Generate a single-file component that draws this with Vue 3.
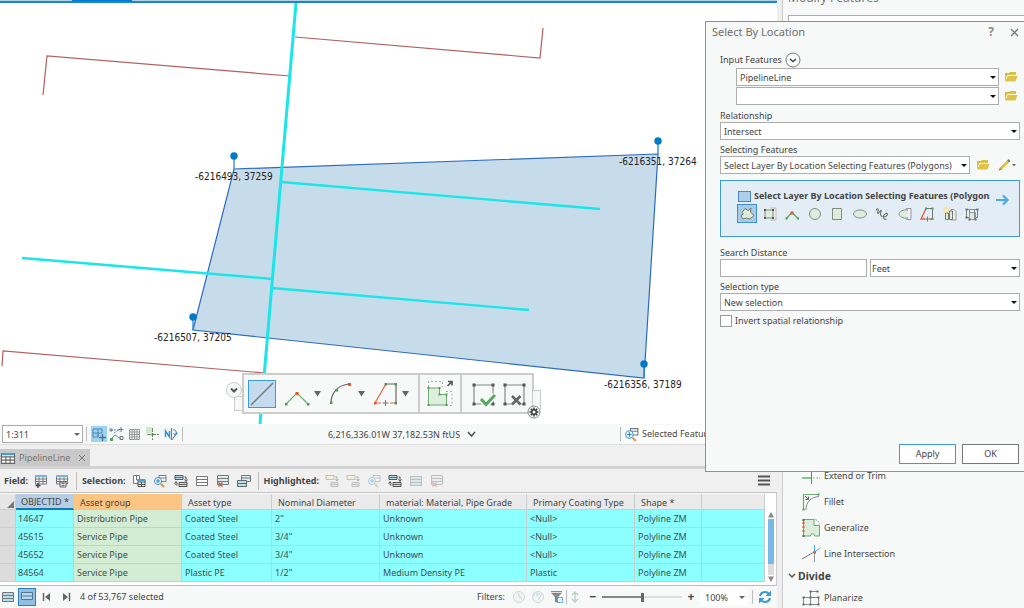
<script setup>
import { ref } from 'vue'

const pins = [
  { x: 234, top: 156, foot: 169, tx: 195, ty: 180, label: '-6216493, 37259' },
  { x: 658, top: 141, foot: 154, tx: 619, ty: 165, label: '-6216351, 37264' },
  { x: 193, top: 317, foot: 330, tx: 154, ty: 341, label: '-6216507, 37205' },
  { x: 644, top: 364, foot: 378, tx: 604, ty: 388, label: '-6216356, 37189' },
]

const columns = [
  { name: 'OBJECTID *', cls: 'c-id' },
  { name: 'Asset group', cls: 'c-group' },
  { name: 'Asset type', cls: 'c-type' },
  { name: 'Nominal Diameter', cls: 'c-dia' },
  { name: 'material: Material, Pipe Grade', cls: 'c-mat' },
  { name: 'Primary Coating Type', cls: 'c-coat' },
  { name: 'Shape *', cls: 'c-shape' },
  { name: '', cls: 'c-rest' },
]
const rows = [
  ['14647', 'Distribution Pipe', 'Coated Steel', '2"', 'Unknown', '<Null>', 'Polyline ZM', ''],
  ['45615', 'Service Pipe', 'Coated Steel', '3/4"', 'Unknown', '<Null>', 'Polyline ZM', ''],
  ['45652', 'Service Pipe', 'Coated Steel', '3/4"', 'Unknown', '<Null>', 'Polyline ZM', ''],
  ['84564', 'Service Pipe', 'Plastic PE', '1/2"', 'Medium Density PE', 'Plastic', 'Polyline ZM', ''],
]

const zoom = ref(50)
const distance = ref('')
const invert = ref(false)
</script>

<template>
  <div class="app">
    <svg class="defs" width="0" height="0" aria-hidden="true">
      <symbol id="folder" viewBox="0 0 14 12">
        <path d="M1 10V2h4l1-1h6v3H4L1 10z" fill="#d8be45" />
        <path d="M1 10.500 3.500 5H13.500L11.500 10.500z" fill="#dec34a" />
        <path d="M2 8 3.600 4.400H12.500" stroke="#fff6c8" stroke-width="1" fill="none" />
      </symbol>
      <symbol id="grid-table" viewBox="0 0 14 12">
        <path d="M1 1.500h12v9H1zM1 4.500h12M1 7.500h12M5 4v6.500M9 4v6.500" fill="#fff" stroke="#666" />
        <path d="M1 1h12v2H1z" fill="#3f9fd8" />
      </symbol>
      <symbol id="lines" viewBox="0 0 14 12">
        <path d="M1.500 1.500h11v9h-11zM1.500 4.500h11M1.500 7.500h11" fill="#fff" stroke="#777" />
      </symbol>
      <symbol id="lines-blue" viewBox="0 0 14 12">
        <path d="M1.500 1.500h11v9h-11z" fill="#b5deef" stroke="#777" />
        <path d="M1.500 4.500h11M1.500 7.500h11" stroke="#777" />
      </symbol>
      <symbol id="lines-clear" viewBox="0 0 14 14">
        <path d="M1.500 1.500h11v9h-11z" fill="#d9edf4" stroke="#777" />
        <path d="M1.500 4.500h11M1.500 7.500h11" stroke="#777" />
        <path d="M2.500 8.500l4 4M6.500 8.500l-4 4" stroke="#dc5b3d" stroke-width="1.500" />
      </symbol>
      <symbol id="switch" viewBox="0 0 14 14">
        <path d="M1 1.500h8v4H1z" fill="#bfe0ea" stroke="#555" />
        <path d="M5 8.500h8v4H5z" fill="#bfe0ea" stroke="#555" />
        <path d="M1 3.500h8M5 10.500h8" stroke="#666" />
        <path d="M10.500 3h1.500v4M10.500 5.500l1.500 2 1.500-2M3.500 11H2V8M.5 9.500 2 7.500l1.500 2" fill="none" stroke="#555" />
      </symbol>
      <symbol id="push" viewBox="0 0 14 14">
        <path d="M1 1.500h8v4H1z" fill="#fff1b8" stroke="#777" />
        <path d="M6 8.500h7v4H6zM6 10.500h7" fill="#c8e6f3" stroke="#777" />
        <path d="M10 3h2v4M10.500 5l1.500 2 1.500-2" fill="none" stroke="#555" />
      </symbol>
      <symbol id="zoom-sel" viewBox="0 0 14 14">
        <path d="M6 1.500h7v6H6zM6 4h7" fill="#fff" stroke="#777" />
        <circle cx="5" cy="7" r="3.500" fill="#e9f5fc" stroke="#3f97d4" />
        <path d="M3 7h4M5 5v4" stroke="#2f80bd" />
        <path d="M8 10l3 3" stroke="#d59a4c" stroke-width="2" />
      </symbol>
    </svg>

    <main class="work">
      <div class="ribbon-edge"><span class="active-tab"></span></div>

      <section class="map" aria-label="Map view">
        <svg class="canvas" width="100%" height="100%">
          <g transform="translate(0 -3)">
            <g fill="none" stroke="#b1605f" stroke-width="1.200">
              <path d="M43 95 47 56 290 76" />
              <path d="M295 37 540 58 543 28" />
              <path d="M2 366 3 351 265 373" />
            </g>
            <path d="M234 169 658 154 644 378 193 330z" fill="#c7dceb" stroke="#2c6abf" stroke-width="1.200" />
            <g fill="none" stroke="#1ae6ea" stroke-width="3">
              <path d="M296 3 260 424" />
              <path d="M281 182 600 209" stroke-width="2.400" />
              <path d="M22 258 273 279" stroke-width="2.400" />
              <path d="M272 288 529 310" stroke-width="2.400" />
            </g>
            <g v-for="p in pins" :key="p.label">
              <path :d="`M${p.x} ${p.top}V${p.foot}`" stroke="#2a86cb" stroke-width="1.300" />
              <circle :cx="p.x" :cy="p.top" r="3.700" fill="#007ac9" />
              <text :x="p.tx" :y="p.ty" class="coord">{{ p.label }}</text>
            </g>
          </g>
        </svg>

        <div class="sketch">
          <span class="wing left"></span>
          <span class="wing right"></span>
          <button class="round collapse" aria-label="Collapse toolbar">
            <svg width="16" height="16"><circle cx="8" cy="8" r="7.500" fill="#f7f9f8" stroke="#ccc" /><path d="M5 6.500l3 3 3-3" fill="none" stroke="#555" stroke-width="2" /></svg>
          </button>
          <div class="seg seg-a">
            <button class="tool on" aria-label="Line">
              <svg width="28" height="28"><path d="M3 25 25 3" stroke="#777" stroke-width="1.400" /></svg>
            </button>
            <button class="tool" aria-label="Right angle line">
              <svg width="28" height="28"><path d="M3 24 14 13 25 24" fill="none" stroke="#6aae6e" stroke-width="1.200" /><path d="M2 23h2.500v2.500H2zM24 23h2.500v2.500H24z" fill="#4d9953" /><path d="M12.500 12h3v3h-3z" fill="#e05a30" /></svg>
            </button>
            <svg class="drop" width="7" height="6"><path d="M0 0h7L3.500 5.500z" fill="#666" /></svg>
            <button class="tool" aria-label="Arc">
              <svg width="28" height="28"><path d="M4 23C4 13 11 5 22 4" fill="none" stroke="#666" stroke-width="1.200" /><path d="M3 21.500h2.500V24H3zM8.500 9H11v2.500H8.500z" fill="#4d9953" /><path d="M21 3h3v3h-3z" fill="#e05a30" /></svg>
            </button>
            <svg class="drop" width="7" height="6"><path d="M0 0h7L3.500 5.500z" fill="#666" /></svg>
            <button class="tool" aria-label="Trace">
              <svg width="28" height="28"><path d="M15 4h10v19" fill="none" stroke="#666" stroke-width="1.200" /><path d="M15 4 4 23h6M19 23h5" fill="none" stroke="#e1684a" stroke-width="1.200" /><path d="M14.500 20v6M11.500 23h6" stroke="#777" /><path d="M13.500 3H16v2.500h-2.500zM23.500 3H26v2.500h-2.500zM23.500 22H26v2.500h-2.500z" fill="#4d9953" /><path d="M3 22h2.500v2.500H3z" fill="#e05a30" /></svg>
            </button>
            <svg class="drop" width="7" height="6"><path d="M0 0h7L3.500 5.500z" fill="#666" /></svg>
          </div>
          <div class="seg seg-b">
            <button class="tool" aria-label="Copy shape">
              <svg width="28" height="28"><path d="M2.500 7V1.500h14V7M20 11.500h6v14h-6" fill="none" stroke="#aaa" stroke-dasharray="2 2" /><path d="M2.500 8h11v6.500h7V25h-18z" fill="#ddeedb" stroke="#6dad71" /><path d="M1.500 7h2v2h-2zM12.500 7h2v2h-2zM12.500 13.500h2v2h-2zM19.500 13.500h2v2h-2zM1.500 24h2v2h-2zM19.500 24h2v2h-2z" fill="#569a5a" /><path d="M22 1.500h4v4M26 1.500l-4.500 4.500" fill="none" stroke="#555" stroke-width="1.600" /></svg>
            </button>
          </div>
          <div class="seg seg-c">
            <button class="tool" aria-label="Finish">
              <svg width="28" height="28"><path d="M4 5h19v19H4z" fill="none" stroke="#888" stroke-width="1.200" /><path d="M2.500 3.500h3v3h-3zM21.500 3.500h3v3h-3zM2.500 22.500h3v3h-3zM21.500 22.500h3v3h-3z" fill="#555" /><path d="M11 19l5 5.500L25 15" fill="none" stroke="#f7f9f8" stroke-width="6" /><path d="M11 19l5 5.500L25 15" fill="none" stroke="#58a85c" stroke-width="3" /></svg>
            </button>
            <button class="tool" aria-label="Discard">
              <svg width="28" height="28"><path d="M5 5h19v19H5z" fill="none" stroke="#888" stroke-width="1.200" /><path d="M3.500 3.500h3v3h-3zM22.500 3.500h3v3h-3zM3.500 22.500h3v3h-3zM22.500 22.500h3v3h-3z" fill="#555" /><path d="M12 16l8.500 8.500M20.500 16 12 24.500" stroke="#f7f9f8" stroke-width="6" /><path d="M12 16l8.500 8.500M20.500 16 12 24.500" stroke="#666" stroke-width="2.600" /></svg>
            </button>
          </div>
          <button class="round gear" aria-label="Toolbar settings">
            <svg width="14" height="14"><circle cx="7" cy="7" r="6" fill="#f7f9f8" stroke="#888" /><circle cx="7" cy="7" r="2.300" fill="none" stroke="#333" stroke-width="1.400" /><path d="M7 2.500v1.500M7 10v1.500M2.500 7H4M10 7h1.500M3.800 3.800l1.100 1.100M9.100 9.100l1.100 1.100M3.800 10.200l1.100-1.100M9.100 4.900l1.100-1.100" stroke="#333" stroke-width="1.500" /></svg>
          </button>
        </div>
      </section>

      <div class="status">
        <span class="pick scale"><select aria-label="Map scale"><option>1:311</option></select><i class="tri soft"></i></span>
        <i class="sep"></i>
        <div class="status-tools">
          <button class="on" aria-label="Snapping"><svg width="16" height="16"><path d="M2 3h5v4H2zM7 3h4v4M2 7v4h5V7M7 11V7h4" fill="none" stroke="#4c88ad" /><path d="M11.500 8v7M8 11.500h7" stroke="#4f7690" stroke-width="1.400" /></svg></button>
          <button aria-label="Inference"><svg width="16" height="16"><path d="M2 13 6 9l3 2 3 2" fill="none" stroke="#4ba0d6" /><path d="M2 4h8M5 7l5-3" stroke="#58a6d8" stroke-dasharray="2 1" /><path d="M12 1v5M9.500 3.500h5M11 10.500h3v3h-3zM1 3h2v2H1z" fill="none" stroke="#777" /><path d="M1 12h3v3H1z" fill="#55a05a" /></svg></button>
          <button aria-label="Grid"><svg width="16" height="16"><path d="M2.500 3.500h10v10h-10zM5 3.500v10M7.500 3.500v10M10 3.500v10M2.500 6h10M2.500 8.500h10M2.500 11h10" fill="none" stroke="#999" /></svg></button>
          <button aria-label="Dynamic constraints"><svg width="16" height="16"><path d="M1 1h6v6H1z" fill="#d3e9ce" /><path d="M7.500 2v12M2 8.500h12" stroke="#6b8f6b" stroke-dasharray="4 1" /><path d="M6.500 7.500h2v2h-2z" fill="#3f8c46" /></svg></button>
          <button aria-label="Correction"><svg width="16" height="16"><path d="M2.500 11V5l4 6V5" fill="none" stroke="#3594d3" stroke-width="1.500" /><path d="M8.500 2v12M9 14l5-8" stroke="#777" /><path d="M10 4q4-1 3 5M10.500 7l2 2.500L14.500 7" fill="none" stroke="#3594d3" /></svg></button>
        </div>
        <i class="sep"></i>
        <div class="coords">6,216,336.01W 37,182.53N ftUS
          <svg width="10" height="7"><path d="M1 1l3.500 4L8 1" fill="none" stroke="#555" stroke-width="1.600" /></svg>
        </div>
        <i class="sep"></i>
        <div class="selected"><svg width="15" height="15"><use href="#zoom-sel" /></svg>Selected Features: 4</div>
      </div>

      <div class="tabs">
        <div class="tab"><svg width="16" height="13"><use href="#grid-table" /></svg><span>PipelineLine</span>
          <button aria-label="Close tab"><svg width="8" height="8"><path d="M1 1l6 6M7 1 1 7" stroke="#777" /></svg></button>
        </div>
      </div>

      <div class="bar">
        <b>Field:</b>
        <div class="icons">
          <button aria-label="Add field"><svg width="14" height="14"><path d="M1.500 2h11v8h-11zM1.500 5h11M5 2v8M9 2v8M1.500 7.500h11" fill="#fff" stroke="#777" /><path d="M1 1h12v2H1z" fill="#7ab4d8" /><path d="M4 9v5M1.500 11.500h5" stroke="#444" stroke-width="1.400" /></svg></button>
          <button aria-label="Calculate field"><svg width="14" height="14"><path d="M1.500 2h11v8h-11zM1.500 5h11M5 2v8M9 2v8M1.500 7.500h11" fill="#fff" stroke="#777" /><path d="M1 1h12v2H1z" fill="#7ab4d8" /><path d="M5 8h6v5H5z" fill="#eee" stroke="#666" /><path d="M6.500 9.500h3M6.500 11.500h3" stroke="#666" /></svg></button>
        </div>
        <i class="sep"></i>
        <b>Selection:</b>
        <div class="icons">
          <button aria-label="Select by attributes"><svg width="14" height="14"><path d="M1.500 1.500h6v8h-6z" fill="#fff" stroke="#777" /><path d="M4.500 1v5h3" stroke="#777" fill="none" /><path d="M6 5.500h7v7H6zM6 8h7M6 10.500h7M9.500 8v4.500" fill="#e7f4fa" stroke="#555" /><path d="M6 5h7v2H6z" fill="#4ba0c8" /></svg></button>
          <button aria-label="Zoom to selection"><svg width="14" height="14"><use href="#zoom-sel" /></svg></button>
          <button aria-label="Switch selection"><svg width="14" height="14"><use href="#switch" /></svg></button>
          <button aria-label="Select all"><svg width="14" height="12"><use href="#lines" /></svg></button>
          <button aria-label="Clear selection"><svg width="14" height="14"><use href="#lines-clear" /></svg></button>
          <button aria-label="Copy rows"><svg width="14" height="14"><path d="M4.500 1.500h9v6h-9zM4.500 4h9" fill="#d9edf4" stroke="#777" /><path d="M.5 6.500h9v6h-9zM.5 9.500h9" fill="#b5deef" stroke="#666" /></svg></button>
        </div>
        <i class="sep"></i>
        <b>Highlighted:</b>
        <div class="icons">
          <button class="dim" aria-label="Select highlighted"><svg width="14" height="14"><use href="#push" /></svg></button>
          <button class="dim" aria-label="Unselect highlighted"><svg width="14" height="14"><use href="#push" /></svg></button>
          <button class="dim" aria-label="Zoom to highlighted"><svg width="14" height="14"><use href="#zoom-sel" /></svg></button>
          <button aria-label="Switch highlighted"><svg width="14" height="14"><use href="#switch" /></svg></button>
          <button class="dim" aria-label="Highlight all"><svg width="14" height="12"><use href="#lines-blue" /></svg></button>
          <button class="dim" aria-label="Delete highlighted"><svg width="14" height="14"><use href="#lines-clear" /></svg></button>
        </div>
        <button class="menu" aria-label="Table menu"><svg width="12" height="12"><path d="M0 1.500h12M0 5.500h12M0 9.500h12" stroke="#555" stroke-width="2" /></svg></button>
      </div>

      <div class="grid-wrap">
        <table>
          <thead>
            <tr><th class="gut"><svg width="7" height="7"><path d="M7 0v7H0z" fill="#777" /></svg></th><th v-for="c in columns" :key="c.cls" :class="c.cls">{{ c.name }}</th></tr>
          </thead>
          <tbody>
            <tr v-for="r in rows" :key="r[0]"><td class="gut"></td><td v-for="(v, i) in r" :key="i" :class="columns[i].cls">{{ v }}</td></tr>
          </tbody>
        </table>
        <div class="scroll">
          <svg width="8" height="6"><path d="M1 5.500h6L4 0z" fill="#888" /></svg>
          <div class="track"><div class="thumb"></div></div>
          <svg width="8" height="6"><path d="M1 .5h6L4 6z" fill="#888" /></svg>
        </div>
      </div>

      <div class="foot">
        <button class="view" aria-label="Show all records"><svg width="14" height="12"><use href="#lines-blue" /></svg></button>
        <button class="view on" aria-label="Show selected records"><svg width="14" height="12"><path d="M1.500 1.500h11v7h-11zM1.500 5h11" fill="#b9d9ec" stroke="#56788f" /></svg></button>
        <button class="nav" aria-label="First record"><svg width="10" height="8"><path d="M1.500 0v8" stroke="#666" stroke-width="1.500" /><path d="M8 0v8L3 4z" fill="#666" /></svg></button>
        <button class="nav" aria-label="Last record"><svg width="10" height="8"><path d="M8.500 0v8" stroke="#666" stroke-width="1.500" /><path d="M2 0v8l5-4z" fill="#666" /></svg></button>
        <span class="count">4 of 53,767 selected</span>
        <span class="filters">Filters:</span>
        <div class="filter-icons">
          <button class="dim" aria-label="Time filter"><svg width="14" height="14"><circle cx="7" cy="7" r="5.500" fill="#e8efe9" stroke="#9aa" /><path d="M7 3.500V7l3 1" fill="none" stroke="#89a" /></svg></button>
          <button class="dim" aria-label="Range filter"><svg width="14" height="14"><circle cx="7" cy="7" r="5.500" fill="#edf3ee" stroke="#9aa" /><path d="M3 2v5M6 2v5M2 4h7M7 10l4-6" fill="none" stroke="#8bb3cc" /></svg></button>
          <button aria-label="Extent filter"><svg width="14" height="14"><path d="M1 1h11v2L8 7v6l-3-1V7L1 3z" fill="#888" /><path d="M1 2.500h11" stroke="#ddd" /><path d="M7.500 7.500h5v5h-5z" fill="#e5f3fb" stroke="#2c91d3" stroke-dasharray="2 1" /></svg></button>
        </div>
        <i class="sep"></i>
        <button class="dim" aria-label="Row height"><svg width="10" height="14"><path d="M5 2v10M2 5l3-3 3 3M2 9l3 3 3-3" fill="none" stroke="#6b9b76" stroke-width="1.500" /></svg></button>
        <button class="step" aria-label="Zoom out">−</button>
        <input v-model="zoom" class="slider" type="range" min="0" max="100" aria-label="Table zoom">
        <button class="step" aria-label="Zoom in">+</button>
        <span class="pick percent"><select aria-label="Zoom percent"><option>100%</option></select><i class="tri soft"></i></span>
        <i class="sep"></i>
        <button class="refresh" aria-label="Refresh"><svg width="14" height="14"><path d="M2 6a5 4.500 0 0 1 9-2M12 8a5 4.500 0 0 1-9 2" fill="none" stroke="#3c9adb" stroke-width="2" /><path d="M13 .5v5.500H7.500zM1 13.500V8h5.500z" fill="#3c9adb" /></svg></button>
      </div>
    </main>

    <aside class="pane">
      <h2>Modify Features</h2>
      <div class="search"></div>
      <ul>
        <li><svg width="20" height="20"><path d="M1 12h9" stroke="#5bab5f" stroke-width="1.400" /><path d="M10.500 1v17" stroke="#777" /><path d="M12 12h7" stroke="#aaa" stroke-dasharray="2 1" /></svg><a href="#extend">Extend or Trim</a></li>
        <li><svg width="20" height="20"><path d="M2.500 18V2.500H18" fill="none" stroke="#6aae6e" stroke-width="1.200" /><path d="M5 18C5 10 10 5 18 4.500" fill="none" stroke="#888" /><path d="M1.500 16.500h2v2h-2zM16.500 1.500h2v2h-2z" fill="#4d9953" /><path d="M4 4l3 3M7.500 4.500v3h-3" fill="none" stroke="#666" /></svg><a href="#fillet">Fillet</a></li>
        <li><svg width="20" height="20"><path d="M2.500 1.500H13v6h5.500v10.500h-5c0-3-4-3-4 0h-7z" fill="#dcedda" stroke="#69ab6d" /><path d="M14 1.500c3 1 4 2 4.500 5" fill="none" stroke="#aaa" stroke-dasharray="2 1" /><path d="M2.500 4v12" stroke="#e0582f" stroke-width="2" stroke-dasharray="2 2" /><path d="M1.500 1h2v2h-2zM1.500 17h2v2h-2z" fill="#4e6b50" /></svg><a href="#generalize">Generalize</a></li>
        <li><svg width="20" height="20"><path d="M1 15 13 8" stroke="#777" /><path d="M13.500 8v10" stroke="#999" /><path d="M13.500 1v7l6-4" fill="none" stroke="#54ace1" /><path d="M12.500 7h2.500v2.500h-2.500z" fill="#e0582f" /></svg><a href="#intersection">Line Intersection</a></li>
      </ul>
      <h3><svg width="8" height="6"><path d="M1 1l3 3 3-3" fill="none" stroke="#555" stroke-width="1.500" /></svg>Divide</h3>
      <ul>
        <li><svg width="20" height="20"><path d="M2.500 9.500h15v7h-15zM9.500 3v13.500M9.500 3.500h7" fill="none" stroke="#888" /><path d="M1.500 8.500h2v2h-2zM8.500 8.500h2v2h-2zM16.500 8.500h2v2h-2zM1.500 15.500h2v2h-2zM8.500 15.500h2v2h-2zM16.500 15.500h2v2h-2zM8.500 2.500h2v2h-2zM15.500 2.500h2v2h-2z" fill="#666" /></svg><a href="#planarize">Planarize</a></li>
      </ul>
    </aside>

    <section class="dialog" role="dialog" aria-labelledby="dlg-title">
      <header>
        <h1 id="dlg-title">Select By Location</h1>
        <button class="help" aria-label="Help">?</button>
        <button aria-label="Close"><svg width="9" height="9"><path d="M1 1l7 7M8 1 1 8" stroke="#777" stroke-width="1.300" /></svg></button>
      </header>
      <form @submit.prevent>
        <div class="inputs-head">
          <label for="in1">Input Features</label>
          <button type="button" aria-label="Add many"><svg width="16" height="16"><circle cx="8" cy="8" r="7" fill="#fff" stroke="#777" /><path d="M5 7l3 2.500L11 7" fill="none" stroke="#444" stroke-width="1.500" /></svg></button>
        </div>
        <div class="line inset">
          <span class="pick"><select id="in1"><option>PipelineLine</option></select><i class="tri"></i></span>
          <button type="button" class="icon" aria-label="Browse"><svg width="14" height="12"><use href="#folder" /></svg></button>
        </div>
        <div class="line inset">
          <span class="pick"><select aria-label="Additional input features"><option></option></select><i class="tri"></i></span>
          <button type="button" class="icon" aria-label="Browse"><svg width="14" height="12"><use href="#folder" /></svg></button>
        </div>
        <label class="cap" for="rel">Relationship</label>
        <span class="pick"><select id="rel"><option>Intersect</option></select><i class="tri"></i></span>
        <label class="cap" for="sel">Selecting Features</label>
        <div class="line">
          <span class="pick"><select id="sel"><option>Select Layer By Location Selecting Features (Polygons)</option></select><i class="tri"></i></span>
          <button type="button" class="icon" aria-label="Browse"><svg width="14" height="12"><use href="#folder" /></svg></button>
          <button type="button" class="icon pencil" aria-label="Edit"><svg width="20" height="14"><path d="M1 12 2 9.500 9 2.500l2 2L4 11.500z" fill="#dfc243" /><path d="M9 2.500 10.500 1l2 2L11 4.500z" fill="#777" /><path d="M.5 13 2 9.500l2 2z" fill="#b38d66" /><path d="M14 6h4l-2 2.500z" fill="#666" /></svg></button>
        </div>

        <div class="template">
          <div class="t-name"><i class="swatch"></i><b>Select Layer By Location Selecting Features (Polygons</b></div>
          <div class="t-tools">
            <button type="button" class="on" aria-label="Polygon"><svg width="16" height="16"><path d="M6 2.500 9 4.500 12 2l-.5 4L15 9.500 11 13l-3.500-1-4 1L2 9.500 4.500 8 3 6.500z" fill="#dcedda" stroke="#777" /></svg></button>
            <button type="button" aria-label="Rectangle trace"><svg width="16" height="16"><path d="M8 2h6v12H8" fill="#eee" stroke="#bbb" /><path d="M3 4h8v8H3z" fill="#dcedda" stroke="#888" /><path d="M2 3h2v2H2zM10 3h2v2h-2zM2 11h2v2H2zM10 11h2v2h-2z" fill="#555" /></svg></button>
            <button type="button" aria-label="Angle"><svg width="16" height="16"><path d="M2.500 12.500 8 6.500l6 6" fill="none" stroke="#5fa863" stroke-width="1.300" /><path d="M1.500 11.500h2v2h-2zM13 11.500h2v2h-2z" fill="#4d9953" /><path d="M6.500 5.500h3v3h-3z" fill="#e0582f" /></svg></button>
            <button type="button" aria-label="Circle"><svg width="16" height="16"><circle cx="8" cy="8" r="5.500" fill="#dcedda" stroke="#888" /></svg></button>
            <button type="button" aria-label="Rectangle"><svg width="16" height="16"><path d="M3.500 2.500h9v11h-9z" fill="#dcedda" stroke="#888" /></svg></button>
            <button type="button" aria-label="Ellipse"><svg width="16" height="16"><ellipse cx="8" cy="8" rx="6.500" ry="4" fill="#dcedda" stroke="#888" /></svg></button>
            <button type="button" aria-label="Freehand"><svg width="16" height="16"><path d="M2 4.500C3 2 5 2.500 4 5s0 3 1 1.500S8 3 7 5.500s-1 4 1 5c3 1 6-1 5.500-2.500S10 8 9.500 10s1 4 3 3" fill="none" stroke="#777" stroke-width="1.200" /></svg></button>
            <button type="button" aria-label="Trace"><svg width="16" height="16"><path d="M9 2.500h5v11H9" fill="#eef" stroke="#999" /><path d="M11 4c-5-1-9 2-9 4s4 5 9 4" fill="#dcedda" stroke="#888" /></svg></button>
            <button type="button" aria-label="Right angle polygon"><svg width="16" height="16"><path d="M7 2.500h6.500V13" fill="none" stroke="#777" /><path d="M7 2.500 2 13h4M11 13h2" fill="none" stroke="#df5f3c" stroke-width="1.300" /><path d="M8.500 10.500v5M6 13h5" stroke="#777" /><path d="M6 1.500h2v2H6zM12.500 1.500h2v2h-2zM12.500 12h2v2h-2z" fill="#4d9953" /></svg></button>
            <button type="button" aria-label="Auto complete"><svg width="16" height="16"><path d="M9 3.500h3l2 2v8.500H9z" fill="#eee" stroke="#999" /><path d="M3.500 7h3v6.500h-3zM7.500 5h3v8.500h-3z" fill="#dcedda" stroke="#777" /><path d="M4.500.5v7M1 4h7M2 1.500l5 5M7 1.500l-5 5" stroke="#f5cf63" stroke-width=".8" /><circle cx="4.500" cy="4" r="1.500" fill="#fff3c4" /></svg></button>
            <button type="button" aria-label="Regular shapes"><svg width="16" height="16"><path d="M2.500 3.500h11v8h-11z" fill="none" stroke="#888" /><path d="M5.500 6.500h6v7h-6z" fill="#dcedda" stroke="#999" /><path d="M5.500 3v4M10.500 3v10" stroke="#888" /><path d="M1.500 2.500h2v2h-2zM12.500 2.500h2v2h-2zM1.500 10.500h2v2h-2zM10.500 12.500h2v2h-2zM4.500 12.500h2v2h-2z" fill="#666" /></svg></button>
          </div>
          <button type="button" class="go" aria-label="Open template"><svg width="14" height="12"><path d="M0 6h11M7 1.500 11.500 6 7 10.500" fill="none" stroke="#4fa9e0" stroke-width="2.200" /></svg></button>
        </div>

        <label class="cap far" for="dist">Search Distance</label>
        <div class="line two">
          <input id="dist" v-model="distance" type="text">
          <span class="pick feet"><select aria-label="Distance unit"><option>Feet</option></select><i class="tri"></i></span>
        </div>
        <label class="cap" for="kind">Selection type</label>
        <span class="pick"><select id="kind"><option>New selection</option></select><i class="tri"></i></span>
        <label class="check"><input v-model="invert" type="checkbox">Invert spatial relationship</label>
        <div class="actions">
          <button type="button" class="primary">Apply</button>
          <button type="button">OK</button>
        </div>
      </form>
    </section>
  </div>
</template>

<style>
body { margin: 0; overflow: hidden; }
</style>

<style scoped>
* { box-sizing: border-box; }
.app {
  position: relative;
  display: grid;
  grid-template-columns: 1fr 242px;
  height: 100vh;
  overflow: hidden;
  background: #f0f0f0;
  color: #444;
  font: 9px/14px "Noto Sans", "Open Sans", sans-serif;
}
.defs { position: absolute; }
svg { display: block; flex: none; }
button, select, input { font: inherit; color: inherit; margin: 0; }
button { display: flex; align-items: center; justify-content: center; padding: 0; border: 0; background: none; }
h1, h2, h3, ul { margin: 0; padding: 0; font-weight: 400; list-style: none; }

.sep { flex: none; width: 1px; height: 14px; background: #bbb; }
.dim { opacity: 0.4; }

.pick { position: relative; display: block; height: 18px; }
.pick select {
  display: block;
  width: 100%;
  height: 100%;
  padding: 1px 14px 0 3px;
  border: 1px solid #adadad;
  border-radius: 0;
  background: #fff;
  appearance: none;
}
.tri {
  position: absolute;
  right: 3px;
  top: 8px;
  border: 3px solid transparent;
  border-top-color: #111;
  border-bottom: 0;
}
.tri.soft { border-top-color: #666; }

/* left work area */
.work { display: flex; flex-direction: column; min-width: 0; border-right: 5px solid #eee; }
.ribbon-edge { flex: none; height: 3px; background: #b5d3e6; border-bottom: 2px solid #1b86c9; }
.active-tab { display: block; width: 60px; height: 1px; margin-left: 72px; background: #0079d3; }
.map { position: relative; flex: 1; min-height: 0; background: #fff; }
.canvas { display: block; overflow: hidden; }
.coord { font: 10px "DejaVu Sans Condensed", "DejaVu Sans", sans-serif; fill: #222; }

.sketch { position: absolute; left: 242px; bottom: 10px; display: flex; height: 41px; background: #ccc; padding: 2px; gap: 2px; }
.seg { position: relative; display: flex; align-items: center; background: #f7f9f8; }
.seg-a { width: 174px; padding-left: 4px; gap: 7px; }
.seg-b { width: 40px; justify-content: center; }
.seg-c { width: 70px; padding-left: 8px; gap: 2px; }
.tool { width: 28px; height: 28px; }
.tool.on { background: #c3daef; box-shadow: inset 0 0 0 1px #3a9bd9; }
.drop { margin: 0 -1px 0 -4px; }
.wing { position: absolute; width: 9px; background: #f7f9f8; border: 1px solid #ccc; }
.wing.left { left: -8px; bottom: 3px; height: 15px; }
.wing.right { right: -7px; bottom: 4px; height: 20px; }
.round { position: absolute; }
.collapse { left: -16px; top: 9px; }
.gear { right: -7px; bottom: -5px; }

.status { flex: none; display: flex; align-items: center; height: 21px; padding-left: 2px; background: #f7f9f8; border-bottom: 1px solid #ddd; }
.scale { width: 81px; margin-right: 3px; }
.status-tools { display: flex; gap: 2px; padding: 0 3px 0 4px; }
.status-tools button { width: 16px; height: 16px; }
.status-tools .on { background: #9ed4f3; }
.coords { flex: 1; display: flex; align-items: center; justify-content: center; gap: 7px; padding: 1px 0 0 2px; }
.selected { display: flex; align-items: center; gap: 3px; width: 153px; height: 18px; margin-left: 3px; background: #fff; }

.tabs { flex: none; display: flex; align-items: flex-end; height: 24px; border-bottom: 3px solid #d3d3d3; }
.tab { display: flex; align-items: center; gap: 3px; width: 90px; height: 17px; padding-top: 1px; background: #c9c9c9; color: #777; }
.tab span { flex: 1; white-space: nowrap; }
.tab button { width: 8px; margin-right: 4px; }

.bar { flex: none; display: flex; align-items: center; height: 24px; padding: 0 7px 0 4px; border-bottom: 1px solid #c2c2c2; white-space: nowrap; }
.bar .sep { height: 18px; margin-right: 5px; }
.icons { display: flex; gap: 7px; padding: 0 7px 0 6px; }
.menu { margin-left: auto; }

.grid-wrap { flex: none; display: flex; align-items: flex-start; padding: 1px 0 3px; background: #fff; border-bottom: 1px solid #bbb; border-right: 1px solid #ccc; }
table { flex: 1; table-layout: fixed; border-collapse: separate; border-spacing: 0; }
th, td { height: 18px; padding: 1px 0 0 3px; border-right: 1px solid #c6cfcf; border-bottom: 1px solid #c6cfcf; font-weight: 400; line-height: 12px; text-align: left; white-space: nowrap; overflow: hidden; }
th { height: 16px; padding: 2px 0 0 6px; background: #eaeaea; color: #444; }
td { background: #8cffff; color: #3f4f4f; }
.gut { width: 16px; background: #dcdcdc; }
th.gut { padding: 5px 0 0 7px; background: #e6e6e6; }
.c-id { width: 58px; padding-left: 2px; }
.c-group { width: 108px; }
.c-type { width: 90px; }
.c-dia { width: 108px; }
.c-mat { width: 147px; }
.c-coat { width: 108px; }
.c-shape { width: 67px; }
th.c-id { padding-left: 5px; background: #b7cde3; border-bottom: 2px solid #1279bd; }
th.c-group { background: #fcc583; }
td.c-group { background: #d3ecd4; }
.scroll { flex: none; display: flex; align-self: stretch; flex-direction: column; align-items: center; gap: 1px; width: 11px; padding: 18px 0 0; }
.track { flex: 1; width: 6px; background: #ddd; }
.thumb { height: 80%; background: #78b9e7; }

.foot { flex: none; display: flex; align-items: center; height: 22px; padding: 0 5px 0 1px; background: #f7f9f8; white-space: nowrap; }
.view { width: 14px; height: 18px; }
.view.on { width: 18px; margin: 0 6px 0 3px; background: #8fbfe3; box-shadow: inset 0 0 0 1px #2f7fb8; }
.nav { width: 10px; margin-right: 9px; }
.count { flex: 1; }
.filters { margin-right: 7px; }
.filter-icons { display: flex; gap: 5px; margin-right: 2px; }
.foot > .dim { margin: 0 8px 0 3px; }
.step { width: 10px; font-weight: 700; font-size: 12px; }
.slider { width: 80px; height: 12px; margin: 0 4px; appearance: none; background: linear-gradient(to right, #888 50%, #ddd 50%) center / 100% 2px no-repeat; }
.slider::-webkit-slider-thumb { appearance: none; width: 3px; height: 9px; background: #666; }
.percent { width: 48px; margin: 0 4px; }
.percent select { border: 0; padding-left: 5px; }
.refresh { margin-left: 5px; }

/* right pane */
.pane { padding-left: 5px; background: #f7f9f8; border-left: 1px solid #ccc; overflow: hidden; }
.pane h2 { height: 15px; margin-top: -10px; font-size: 12px; line-height: 16px; color: #777; }
.search { height: 448px; margin-top: 10px; border: 1px solid #aaa; border-right: 0; background: #fff; border-bottom: 0; }
.pane li { display: flex; align-items: center; gap: 3px; height: 26px; padding-left: 13px; }
.pane a { color: inherit; text-decoration: none; }
.pane h3 { display: flex; align-items: center; gap: 2px; height: 18px; font-weight: 700; }

/* dialog */
.dialog { position: absolute; right: 0; top: 21px; width: 319px; height: 451px; background: #f7f9f8; border: 1px solid #8f8f8f; border-right: 0; }
.dialog header { display: flex; align-items: center; gap: 16px; height: 20px; padding: 0 5px 0 6px; }
.dialog h1 { flex: 1; font-size: 11px; color: #6e6e6e; }
.help { font-size: 12px; font-weight: 700; color: #888; }
form { display: flex; flex-direction: column; height: 429px; padding: 10px 4px 7px 14px; }
.inputs-head { display: flex; align-items: center; gap: 3px; height: 16px; }
.line { display: flex; align-items: center; }
.line .pick { flex: 1; }
.inset { padding-left: 16px; margin-bottom: 1px; }
.line .icon { margin-left: 6px; }
.inset .icon { margin-right: 2px; margin-left: 5px; }
.line .pencil { margin: 0 2px 0 8px; }
.cap { height: 13px; margin-top: 3px; }
.cap.far { margin-top: 9px; }
.template { position: relative; height: 57px; margin-top: 6px; padding: 7px 29px 0 16px; background: #e2edf5; border: 1px solid #3c9ad8; }
.t-name { display: flex; align-items: center; gap: 3px; height: 16px; padding-left: 1px; white-space: nowrap; overflow: hidden; }
.swatch { flex: none; width: 13px; height: 11px; background: #afcfe8; border: 1px solid #4a86c8; }
.t-tools { display: flex; justify-content: space-between; margin-right: 8px; }
.t-tools button { width: 20px; height: 19px; flex: none; }
.t-tools .on { background: #a9cbe6; box-shadow: inset 0 0 0 1px #3c8fcb; }
.go { position: absolute; right: 9px; top: 13px; }
.two { gap: 3px; }
.two input { width: 147px; height: 18px; border: 1px solid #adadad; border-radius: 0; background: #fff; padding: 0 3px; }
.feet select { padding-left: 1px; }
.check { display: flex; align-items: center; gap: 3px; height: 12px; margin-top: 4px; }
.check input { width: 12px; height: 12px; appearance: none; border: 1px solid #999; background: #fff; }
.actions { display: flex; justify-content: flex-end; gap: 6px; margin-top: auto; padding-right: 1px; }
.actions button { width: 57px; height: 20px; border: 1px solid #777; background: #fff; }
.actions .primary { border-color: #3c9ad8; }
</style>
